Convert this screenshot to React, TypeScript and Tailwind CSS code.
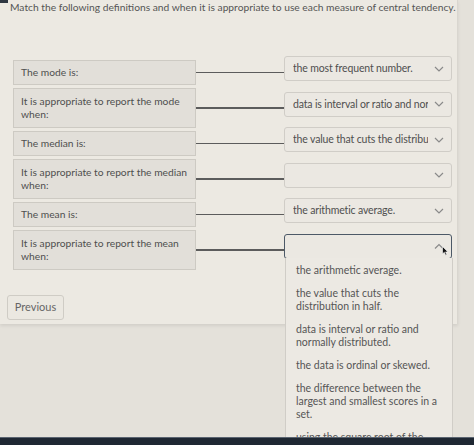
import React from "react";

const rows = [
  { prompt: "The mode is:", answer: "the most frequent number." },
  { prompt: "It is appropriate to report the mode when:", answer: "data is interval or ratio and normally distributed." },
  { prompt: "The median is:", answer: "the value that cuts the distribution in half." },
  { prompt: "It is appropriate to report the median when:", answer: "" },
  { prompt: "The mean is:", answer: "the arithmetic average." },
  { prompt: "It is appropriate to report the mean when:", answer: "", open: true },
];

const options = [
  "the arithmetic average.",
  "the value that cuts the distribution in half.",
  "data is interval or ratio and normally distributed.",
  "the data is ordinal or skewed.",
  "the difference between the largest and smallest scores in a set.",
  "using the square root of the variance.",
];

function Chevron({ up }: { up?: boolean }) {
  return (
    <svg width="10" height="6" viewBox="0 0 10 6" className="absolute right-[7px] top-1/2 -translate-y-1/2">
      <polyline
        points={up ? "1,5.5 5,1.5 9,5.5" : "1,1 5,5 9,1"}
        fill="none"
        stroke="#8a8a8a"
        strokeWidth="1.2"
      />
    </svg>
  );
}

export default function App() {
  return (
    <div className="relative w-[474px] h-[445px] overflow-hidden bg-[#e4e1da] font-['Lato',sans-serif] text-[#4f4f4f]">
      <div className="relative w-[458px] bg-[#ece9e2] border-r border-[#d9d6cf] shadow-[0_2px_3px_rgba(0,0,0,0.08)]">
        <div className="absolute left-0 top-0 w-[8px] h-[3px] bg-[#2e3742]" />
        <p className="pl-[10px] text-[10.25px] leading-[14px] text-[#555] whitespace-nowrap">
          Match the following definitions and when it is appropriate to use each measure of central tendency.
        </p>

        <div className="mt-[46px] flex flex-col gap-[3px]">
          {rows.map((r, i) => (
            <div key={i} className="flex items-center pl-[13px]">
              <div
                className={`w-[183px] shrink-0 bg-[#e2dfd9] border border-[#cdcac3] pl-[7px] pr-[2px] text-[10.25px] leading-[13px] ${
                  r.prompt.length > 20 ? "py-[6px]" : "py-[5px]"
                }`}
              >
                {r.prompt}
              </div>
              <div className="w-[88px] h-[1.5px] bg-[#5c5c5c]" />
              <div
                className={`relative w-[168px] h-[25px] -translate-y-[4px] rounded-[3px] bg-[#ebe8e2] ${
                  r.open ? "border-[1.5px] border-[#4c5967]" : "border border-[#d0cdc7]"
                }`}
              >
                <div className="ml-[8px] w-[135px] pt-[5px] text-[10.5px] tracking-[-0.15px] leading-[13px] whitespace-nowrap overflow-hidden">
                  {r.answer}
                </div>
                <Chevron up={r.open} />
                {r.open && (
                  <>
                    <svg width="7" height="10" viewBox="0 0 7 10" className="absolute right-[2px] top-[11px]">
                      <path d="M0.5 0.5 L0.5 8 L2.3 6.3 L3.6 9.2 L4.8 8.7 L3.6 5.9 L6 5.9 Z" fill="#111" stroke="#fff" strokeWidth="0.6" />
                    </svg>
                    <ul className="absolute left-0 top-full w-[168px] h-[200px] z-10 bg-[#ece9e3] border-x border-[#d0cdc7] pt-[1px]">
                      {options.map((o) => (
                        <li key={o} className="pl-[10px] pr-[14px] py-[5px] text-[10.5px] leading-[13px] text-[#555]">
                          {o}
                        </li>
                      ))}
                    </ul>
                  </>
                )}
              </div>
            </div>
          ))}
        </div>

        <div className="mt-[23px] pl-[7px] pb-[4px]">
          <button className="w-[57px] h-[25px] rounded-[3px] border border-[#cfccc5] bg-[#ebe8e1] text-[11px] text-[#666]">
            Previous
          </button>
        </div>
      </div>

      <div className="absolute left-0 bottom-0 w-full h-[8px] z-20 bg-[#1f2833] border-t border-[#5a6470]" />
    </div>
  );
}
